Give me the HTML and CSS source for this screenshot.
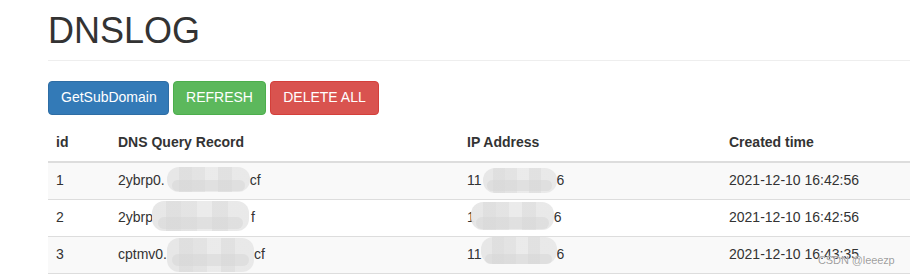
FILE: index.html
```html
<!DOCTYPE html>
<html>
<head>
<meta charset="utf-8">
<title>DNSLOG</title>
<link rel="stylesheet" href="styles.css">
</head>
<body>
<div class="container">
  <h1 class="page-header">DNSLOG</h1>
  <div class="actions">
    <button class="btn btn-primary">GetSubDomain</button>
    <button class="btn btn-success">REFRESH</button>
    <button class="btn btn-danger">DELETE ALL</button>
  </div>
  <table class="table">
    <colgroup>
      <col class="c-id"><col class="c-dns"><col class="c-ip"><col class="c-time">
    </colgroup>
    <thead>
      <tr><th>id</th><th>DNS Query Record</th><th>IP Address</th><th>Created time</th></tr>
    </thead>
    <tbody>
      <tr>
        <td>1</td>
        <td>2ybrp0.<span class="blur b-d1"></span>cf</td>
        <td>11<span class="blur b-i1"></span>6</td>
        <td>2021-12-10 16:42:56</td>
      </tr>
      <tr>
        <td>2</td>
        <td>2ybrp<span class="blur b-d2"></span>f</td>
        <td>1<span class="blur b-i2"></span>6</td>
        <td>2021-12-10 16:42:56</td>
      </tr>
      <tr>
        <td>3</td>
        <td>cptmv0.<span class="blur b-d3"></span>cf</td>
        <td>11<span class="blur b-i3"></span>6</td>
        <td>2021-12-10 16:43:35</td>
      </tr>
    </tbody>
  </table>
</div>
<div class="watermark">CSDN @leeezp</div>
</body>
</html>
```
FILE: styles.css
```css
html, body {
  margin: 0;
  padding: 0;
  overflow: hidden;
  background: #fff;
}
body {
  font-family: "Liberation Sans", Arial, Helvetica, sans-serif;
  font-size: 14px;
  line-height: 1.42857;
  color: #333;
  position: relative;
  width: 910px;
  height: 275px;
}
.container {
  margin-left: 48px;
  width: 1000px;
}
.page-header {
  font-size: 36px;
  font-weight: 500;
  line-height: 1.1;
  margin: 11px 0 20px;
  padding-bottom: 9px;
  border-bottom: 1px solid #eee;
}
.actions {
  display: flex;
  gap: 4px;
  margin-bottom: 10px;
}
.btn {
  font-family: inherit;
  font-size: 14px;
  line-height: 1.42857;
  padding: 6px 12px;
  border: 1px solid transparent;
  border-radius: 4px;
  color: #fff;
  cursor: pointer;
  margin: 0;
}
.btn-primary { background: #337ab7; border-color: #2e6da4; width: 121px; }
.btn-success { background: #5cb85c; border-color: #4cae4c; width: 93px; }
.btn-danger  { background: #d9534f; border-color: #d43f3a; width: 109px; }

.table {
  border-collapse: collapse;
  border-spacing: 0;
  width: 1000px;
  table-layout: fixed;
}
.c-id { width: 62px; }
.c-dns { width: 349px; }
.c-ip { width: 262px; }
.table th, .table td {
  padding: 8px;
  text-align: left;
  vertical-align: top;
  white-space: nowrap;
}
.table th {
  font-weight: bold;
  border-bottom: 2px solid #ddd;
}
.table td {
  border-top: 1px solid #ddd;
}
.table tbody tr:nth-child(odd) td {
  background: #f9f9f9;
}
.table tbody tr:last-child td {
  border-bottom: 1px solid #ddd;
}

.blur {
  display: inline-block;
  position: relative;
  height: 1px;
  vertical-align: middle;
}
.blur::before {
  content: "";
  position: absolute;
  left: 0;
  right: 0;
  border-radius: 12px;
  background:
    linear-gradient(90deg,
      #e6e6e6 0 14%, #dedede 14% 30%, #e2e2e2 30% 46%, #eaeaea 46% 62%, #e0e0e0 62% 78%, #e8e8e8 78% 100%);
  opacity: 0.95;
}
.blur::after {
  content: "";
  position: absolute;
  left: 6%;
  right: 6%;
  height: 45%;
  border-radius: 10px;
  background: rgba(214, 214, 214, 0.5);
}
.b-d1 { width: 83px; margin-left: 2px; }
.b-d1::before { top: -13px; height: 25px; }
.b-d1::after { top: 0; height: 11px; }
.b-d2 { width: 97px; margin-left: -1px; margin-right: 2px; }
.b-d2::before { top: -16px; height: 30px; }
.b-d2::after { top: 0; height: 12px; }
.b-d3 { width: 87px; margin-left: 0; }
.b-d3::before { top: -16px; height: 34px; }
.b-d3::after { top: 0; height: 12px; }
.b-i1 { width: 74px; margin-left: 1px; }
.b-i1::before { top: -12px; height: 25px; }
.b-i1::after { top: 0; height: 11px; }
.b-i2 { width: 83px; margin-left: -4px; }
.b-i2::before { top: -15px; height: 28px; }
.b-i2::after { top: 0; height: 12px; }
.b-i3 { width: 76px; margin-left: -1px; }
.b-i3::before { top: -17px; height: 27px; }
.b-i3::after { top: 0; height: 10px; }

.watermark {
  position: absolute;
  left: 818px;
  top: 254px;
  font-family: "Liberation Sans", Arial, sans-serif;
  font-size: 11px;
  letter-spacing: -0.1px;
  line-height: 13px;
  color: rgba(140, 140, 140, 0.85);
  text-shadow: 0 0 1px #fff, 0 0 1px #fff;
}
```
